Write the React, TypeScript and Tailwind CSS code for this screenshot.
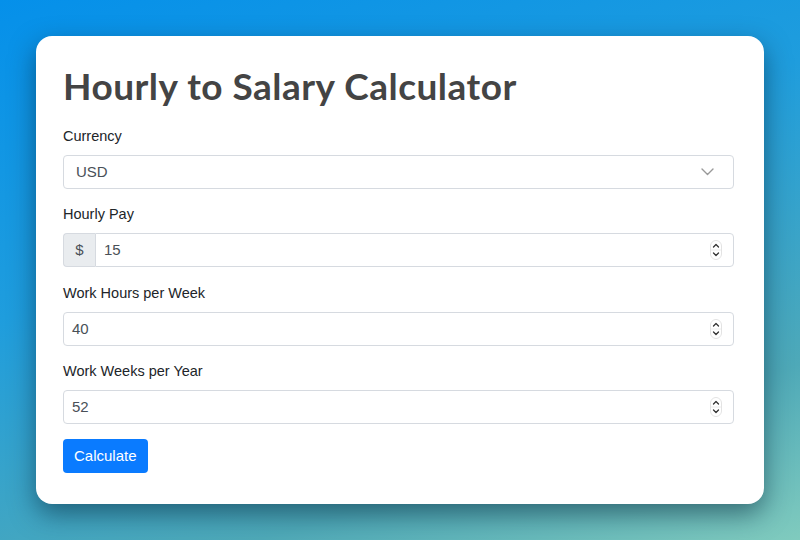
import type { ReactNode } from "react"

const LABEL = "block h-5 leading-5 text-[14.5px] text-[#212529] mb-[9px]"

function Spinner() {
  return (
    <svg width="12" height="20" viewBox="0 0 12 20" className="shrink-0">
      <rect x="0.5" y="0.5" width="11" height="19" rx="5.5" fill="#fff" stroke="#e3e3e3" />
      <line x1="1" y1="10" x2="11" y2="10" stroke="#ececec" />
      <path d="M3.5 7 L6 4.5 L8.5 7" fill="none" stroke="#333" strokeWidth="1.3" strokeLinecap="round" strokeLinejoin="round" />
      <path d="M3.5 13 L6 15.5 L8.5 13" fill="none" stroke="#333" strokeWidth="1.3" strokeLinecap="round" strokeLinejoin="round" />
    </svg>
  )
}

/** 数字输入框 */
function NumberField({ value, prefix }: { value: string; prefix?: ReactNode }) {
  return (
    <div className="flex h-[34px] w-full">
      {prefix && (
        <span className="flex w-8 items-center justify-center rounded-l-[4px] border border-r-0 border-[#d6dae0] bg-[#e9ecef] text-[15px] text-[#495057]">
          {prefix}
        </span>
      )}
      <div
        className={`flex flex-1 items-center border border-[#d6dae0] bg-white pl-2 pr-[11px] ${
          prefix ? "rounded-r-[4px]" : "rounded-[4px]"
        }`}
      >
        <span className="flex-1 text-[15px] text-[#495057]">{value}</span>
        <Spinner />
      </div>
    </div>
  )
}

function Field({ label, children, wide }: { label: string; children: ReactNode; wide?: boolean }) {
  return (
    <div className={wide ? "mb-[16px]" : "mb-[15px]"}>
      <label className={LABEL}>{label}</label>
      {children}
    </div>
  )
}

export default function App() {
  return (
    <div
      className="flex h-[540px] w-[800px] items-start justify-center bg-[linear-gradient(162deg,#0590ea_0%,#1f9ddd_40%,#4ea9b8_78%,#80cbbe_100%)] pt-9"
      style={{ fontFamily: '"Liberation Sans", Arial, sans-serif' }}
    >
      <div className="h-[468px] w-[728px] rounded-2xl bg-white pl-[27px] pr-[30px] pt-[27px] shadow-[0_10px_26px_rgba(0,30,50,0.5)]">
        <h1
          className="mb-[17px] h-[46px] text-[37px] font-bold leading-[46px] tracking-[0.5px] text-[#444]"
          style={{ fontFamily: "Lato, sans-serif" }}
        >
          Hourly to Salary Calculator
        </h1>

        <Field label="Currency">
          <div className="flex h-[34px] items-center rounded-[4px] border border-[#d6dae0] bg-white pl-3 pr-[19px]">
            <span className="flex-1 text-[15px] text-[#495057]">USD</span>
            <svg width="13" height="8" viewBox="0 0 13 8">
              <path d="M1 1 L6.5 6.5 L12 1" fill="none" stroke="#999" strokeWidth="1.4" strokeLinecap="round" strokeLinejoin="round" />
            </svg>
          </div>
        </Field>

        <Field label="Hourly Pay" wide>
          <NumberField value="15" prefix="$" />
        </Field>

        <Field label="Work Hours per Week">
          <NumberField value="40" />
        </Field>

        <Field label="Work Weeks per Year">
          <NumberField value="52" />
        </Field>

        <button className="h-[34px] rounded-[4px] bg-[#0a7bff] px-[11px] text-[15px] text-white">
          Calculate
        </button>
      </div>
    </div>
  )
}
